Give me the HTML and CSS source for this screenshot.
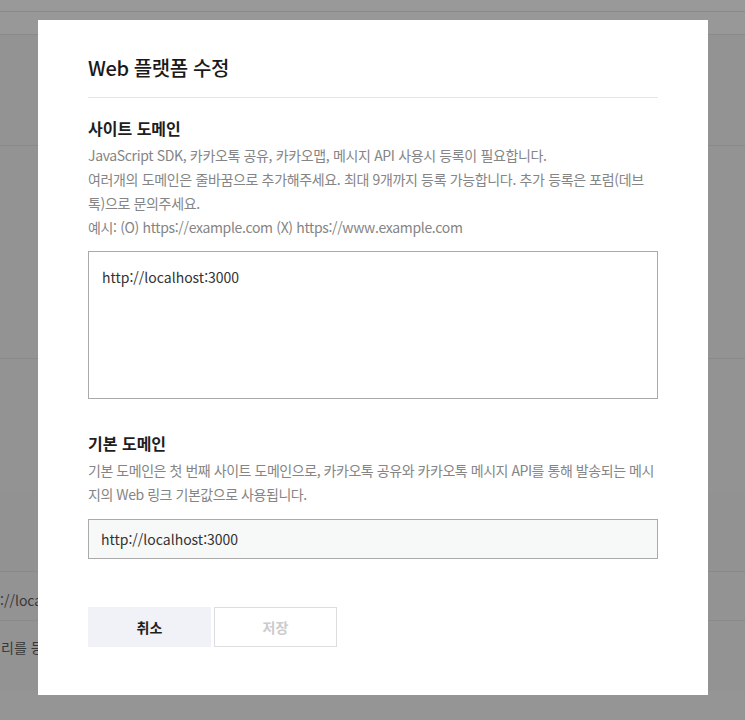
FILE: index.html
```html
<!DOCTYPE html>
<html lang="ko">
<head>
<meta charset="utf-8">
<title>Web 플랫폼 수정</title>
<link rel="stylesheet" href="styles.css">
</head>
<body>
<div class="page">
  <div class="bg-row bg-top"></div>
  <div class="bg-row bg-tab"></div>
  <div class="bg-row bg-a"></div>
  <div class="bg-row bg-b"></div>
  <div class="bg-row bg-c"></div>
  <div class="bg-row bg-d"></div>
  <div class="bg-row bg-e"><span class="bg-text">://localhost:3000</span></div>
  <div class="bg-row bg-f"><span class="bg-text">리를 등록해주세요</span></div>
  <div class="bg-row bg-g"></div>
</div>

<div class="modal">
  <h1 class="modal-title">Web 플랫폼 수정</h1>

  <section class="field">
    <h2 class="field-title">사이트 도메인</h2>
    <p class="field-desc">JavaScript SDK, 카카오톡 공유, 카카오맵, 메시지 API 사용시 등록이 필요합니다.<br>여러개의 도메인은 줄바꿈으로 추가해주세요. 최대 9개까지 등록 가능합니다. 추가 등록은 포럼(데브톡)으로 문의주세요.<br>예시: (O) https://example.com (X) https://www.example.com</p>
    <div class="textarea">http://localhost:3000</div>
  </section>

  <section class="field field-second">
    <h2 class="field-title">기본 도메인</h2>
    <p class="field-desc field-desc-tight">기본 도메인은 첫 번째 사이트 도메인으로, 카카오톡 공유와 카카오톡 메시지 API를 통해 발송되는 메시지의 Web 링크 기본값으로 사용됩니다.</p>
    <div class="input">http://localhost:3000</div>
  </section>

  <div class="actions">
    <button class="btn btn-cancel" type="button">취소</button>
    <button class="btn btn-save" type="button">저장</button>
  </div>
</div>
</body>
</html>
```

FILE: styles.css
```css
* { box-sizing: border-box; }

html, body {
  margin: 0;
  padding: 0;
  height: 100%;
  overflow: hidden;
}

body {
  background: #939393;
  font-family: "Noto Sans CJK KR", "Noto Sans", sans-serif;
  color: #222;
}

.page {
  display: flex;
  flex-direction: column;
}

.bg-row {
  border-bottom: 1px solid #8a8a8a;
  position: relative;
  overflow: hidden;
}

.bg-top { height: 12px; background: #999; }
.bg-tab { height: 23px; background: #989898; }
.bg-a { height: 111px; background: #939393; }
.bg-b { height: 213px; background: #939393; }
.bg-c { height: 133px; background: #939393; border-bottom: none; }
.bg-d { height: 80px; background: #929292; }
.bg-e { height: 49px; background: #939393; }
.bg-f { height: 70px; background: #939393; border-bottom: none; }
.bg-g { height: 30px; background: #959595; border-bottom: none; }

.bg-text {
  position: absolute;
  left: 0;
  white-space: nowrap;
  font-size: 14px;
  line-height: 20px;
  color: #383838;
}
.bg-e .bg-text { top: 18px; }
.bg-f .bg-text { top: 16px; left: 1px; }

.modal {
  position: absolute;
  left: 38px;
  top: 20px;
  width: 670px;
  height: 675px;
  background: #fff;
  padding: 0 50px;
}

.modal-title {
  margin: 0;
  padding-top: 34px;
  padding-bottom: 15px;
  font-size: 20px;
  line-height: 28px;
  font-weight: 500;
  color: #1a1a1a;
  border-bottom: 1px solid #e6e6e6;
  letter-spacing: -0.4px;
}

.field {
  padding-top: 18px;
}

.field-second {
  padding-top: 32px;
}

.field-title {
  margin: 0;
  font-size: 16px;
  line-height: 24px;
  font-weight: 700;
  color: #1e1e1e;
}

.field-desc {
  margin: 3px 0 0;
  font-size: 14px;
  line-height: 24px;
  color: #858585;
  letter-spacing: -0.35px;
}

.field-desc-tight {
  letter-spacing: -0.45px;
}

.textarea {
  margin-top: 12px;
  height: 148px;
  border: 1px solid #aaa;
  padding: 15px 13px;
  font-size: 14px;
  line-height: 20px;
  color: #333;
}

.input {
  margin-top: 13px;
  height: 40px;
  border: 1px solid #aaa;
  background: #f7f8f8;
  padding: 9px 12px;
  font-size: 14px;
  line-height: 20px;
  color: #333;
}

.actions {
  display: flex;
  gap: 3px;
  margin-top: 48px;
}

.btn {
  width: 123px;
  height: 40px;
  font-family: inherit;
  font-size: 14px;
  font-weight: 700;
  border: 1px solid transparent;
  padding: 0;
}

.btn-cancel {
  background: #f1f2f7;
  color: #1e1e1e;
}

.btn-save {
  background: #fff;
  border-color: #ddd;
  color: #ccc;
}
```
